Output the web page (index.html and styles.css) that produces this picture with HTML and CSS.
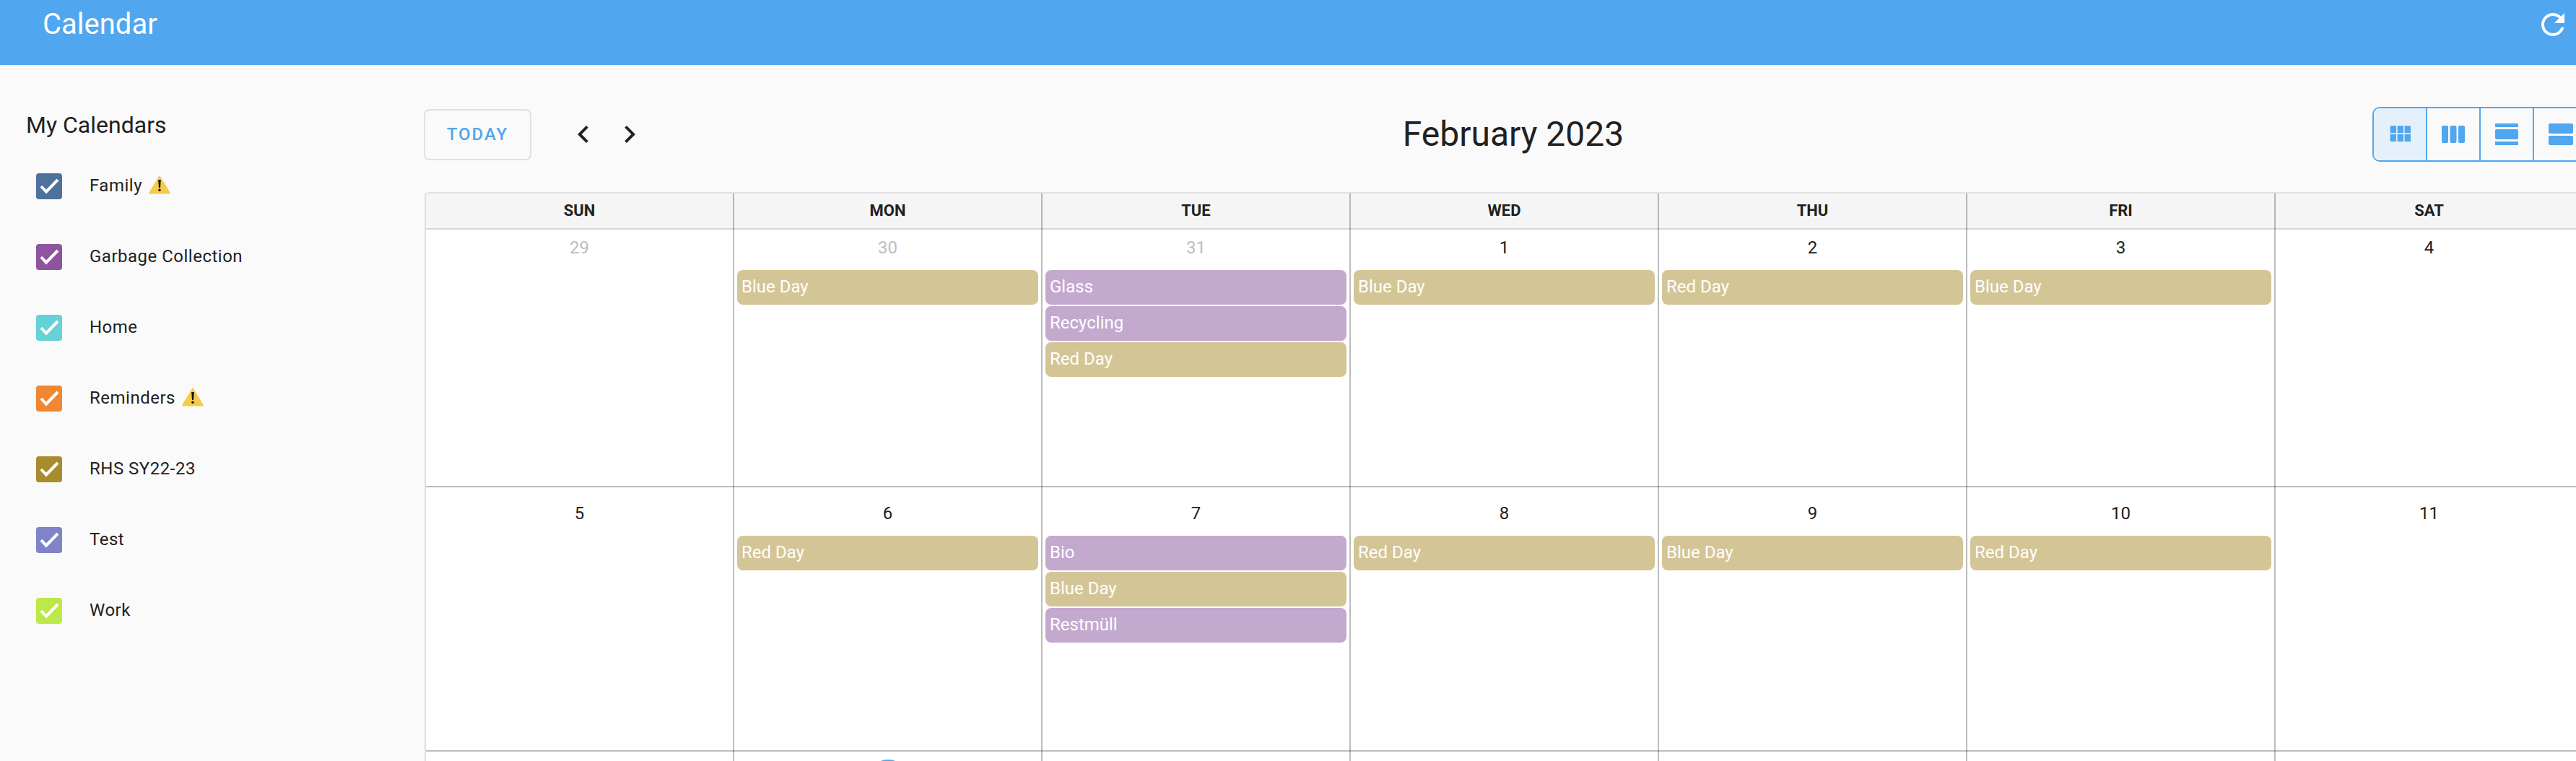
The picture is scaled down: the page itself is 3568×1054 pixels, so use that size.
FILE: index.html
```html
<!DOCTYPE html>
<html lang="en">
<head>
<meta charset="utf-8">
<title>Calendar</title>
<link rel="stylesheet" href="styles.css">
</head>
<body>
<header class="app-bar">
  <div class="app-title">Calendar</div>
  <svg class="refresh" viewBox="0 0 24 24"><path d="M17.65,6.35C16.2,4.9 14.21,4 12,4A8,8 0 0,0 4,12A8,8 0 0,0 12,20C15.73,20 18.84,17.45 19.73,14H17.65C16.83,16.33 14.61,18 12,18A6,6 0 0,1 6,12A6,6 0 0,1 12,6C13.66,6 15.14,6.69 16.22,7.78L13,11H20V4L17.65,6.35Z"/></svg>
</header>
<main class="layout">
  <aside class="sidebar">
    <h2 class="side-title">My Calendars</h2>
    <ul class="cal-list">
      <li class="cal-item"><span class="box c-family"><svg viewBox="0 0 36 36"><path d="M7 18L14 25.5L30 9"/></svg></span><span class="cal-name">Family</span><svg class="warn" viewBox="0 0 30 26"><path class="warn-bg" d="M15 1.500L29 24.500H1Z"/><path class="warn-mark" d="M13.200 6h3.600l-.8 11h-2Z"/><circle class="warn-mark" cx="15" cy="20.300" r="1.700"/></svg></li>
      <li class="cal-item"><span class="box c-garbage"><svg viewBox="0 0 36 36"><path d="M7 18L14 25.5L30 9"/></svg></span><span class="cal-name">Garbage Collection</span></li>
      <li class="cal-item"><span class="box c-home"><svg viewBox="0 0 36 36"><path d="M7 18L14 25.5L30 9"/></svg></span><span class="cal-name">Home</span></li>
      <li class="cal-item"><span class="box c-reminders"><svg viewBox="0 0 36 36"><path d="M7 18L14 25.5L30 9"/></svg></span><span class="cal-name">Reminders</span><svg class="warn" viewBox="0 0 30 26"><path class="warn-bg" d="M15 1.500L29 24.500H1Z"/><path class="warn-mark" d="M13.200 6h3.600l-.8 11h-2Z"/><circle class="warn-mark" cx="15" cy="20.300" r="1.700"/></svg></li>
      <li class="cal-item"><span class="box c-rhs"><svg viewBox="0 0 36 36"><path d="M7 18L14 25.5L30 9"/></svg></span><span class="cal-name">RHS SY22-23</span></li>
      <li class="cal-item"><span class="box c-test"><svg viewBox="0 0 36 36"><path d="M7 18L14 25.5L30 9"/></svg></span><span class="cal-name">Test</span></li>
      <li class="cal-item"><span class="box c-work"><svg viewBox="0 0 36 36"><path d="M7 18L14 25.5L30 9"/></svg></span><span class="cal-name">Work</span></li>
    </ul>
  </aside>
  <section class="content">
    <div class="toolbar">
      <div class="nav">
        <button class="today">TODAY</button>
        <button class="chev"><svg viewBox="0 0 24 24"><path d="M15.41,16.58L10.83,12L15.41,7.41L14,6L8,12L14,18L15.41,16.58Z"/></svg></button>
        <button class="chev"><svg viewBox="0 0 24 24"><path d="M8.59,16.58L13.17,12L8.59,7.41L10,6L16,12L10,18L8.59,16.58Z"/></svg></button>
      </div>
      <h1 class="month">February 2023</h1>
      <div class="views">
        <button class="view active"><svg viewBox="0 0 24 24"><path d="M16,5V11H21V5M10,11H15V5H10M16,18H21V12H16M10,18H15V12H10M4,11H9V5H4M4,18H9V12H4V18Z"/></svg></button>
        <button class="view"><svg viewBox="0 0 40 40"><rect x="4" y="8" width="9" height="24" rx="2"/><rect x="15.500" y="8" width="9" height="24" rx="2"/><rect x="27" y="8" width="9" height="24" rx="2"/></svg></button>
        <button class="view"><svg viewBox="0 0 40 40"><rect x="4" y="5" width="32" height="5"/><rect x="4" y="13" width="32" height="14" rx="2"/><rect x="4" y="30" width="32" height="5"/></svg></button>
        <button class="view"><svg viewBox="0 0 40 40"><rect x="4" y="5" width="34" height="14" rx="2"/><rect x="4" y="22" width="34" height="13" rx="2"/></svg></button>
      </div>
    </div>
    <div class="cal">
      <div class="dow-row">
        <div class="dow">SUN</div><div class="dow">MON</div><div class="dow">TUE</div><div class="dow">WED</div><div class="dow">THU</div><div class="dow">FRI</div><div class="dow">SAT</div>
      </div>
      <div class="week first">
        <div class="day"><div class="num dim">29</div></div>
        <div class="day"><div class="num dim">30</div><div class="ev gold">Blue Day</div></div>
        <div class="day"><div class="num dim">31</div><div class="ev purple">Glass</div><div class="ev purple">Recycling</div><div class="ev gold">Red Day</div></div>
        <div class="day"><div class="num">1</div><div class="ev gold">Blue Day</div></div>
        <div class="day"><div class="num">2</div><div class="ev gold">Red Day</div></div>
        <div class="day"><div class="num">3</div><div class="ev gold">Blue Day</div></div>
        <div class="day"><div class="num">4</div></div>
      </div>
      <div class="week">
        <div class="day"><div class="num">5</div></div>
        <div class="day"><div class="num">6</div><div class="ev gold">Red Day</div></div>
        <div class="day"><div class="num">7</div><div class="ev purple">Bio</div><div class="ev gold">Blue Day</div><div class="ev purple">Restmüll</div></div>
        <div class="day"><div class="num">8</div><div class="ev gold">Red Day</div></div>
        <div class="day"><div class="num">9</div><div class="ev gold">Blue Day</div></div>
        <div class="day"><div class="num">10</div><div class="ev gold">Red Day</div></div>
        <div class="day"><div class="num">11</div></div>
      </div>
      <div class="week">
        <div class="day"></div>
        <div class="day"><div class="today-dot"></div></div>
        <div class="day"></div>
        <div class="day"></div>
        <div class="day"></div>
        <div class="day"></div>
        <div class="day"></div>
      </div>
    </div>
  </section>
</main>
</body>
</html>
```
FILE: styles.css
```css
* { box-sizing: border-box; }
html, body { margin: 0; height: 100%; overflow: hidden; }
body { font-family: Roboto, "Liberation Sans", sans-serif; background: #fafafa; color: #212121; }
button { font-family: inherit; background: none; border: 0; padding: 0; margin: 0; }

.app-bar { height: 90px; background: #50a6ef; color: #fff; display: flex; justify-content: space-between; align-items: flex-start; padding: 10px 8px 0 59px; }
.app-title { font-size: 40px; line-height: 47px; }
.refresh { width: 48px; height: 48px; fill: #fff; }

.layout { display: flex; height: 964px; overflow: hidden; }
.sidebar { flex: 0 0 587px; padding: 64px 0 0 36px; }
.side-title { margin: 0; font-size: 32px; font-weight: 400; line-height: 38px; }
.cal-list { list-style: none; margin: 48px 0 0 14px; padding: 0; display: flex; flex-direction: column; gap: 62px; }
.cal-item { display: flex; align-items: center; height: 36px; }
.box { flex: none; width: 36px; height: 36px; border-radius: 4px; margin-right: 38px; }
.box svg { display: block; width: 36px; height: 36px; fill: none; stroke: #fff; stroke-width: 4; }
.cal-name { font-size: 24px; letter-spacing: .5px; line-height: 32px; position: relative; top: -1px; }
.warn { width: 30px; height: 26px; margin-left: 9px; margin-top: -4px; }
.warn-bg { fill: #f5cb4c; stroke: #f5cb4c; stroke-width: 2; stroke-linejoin: round; }
.warn-mark { fill: #111; }
.c-family { background: #4f729c; }
.c-garbage { background: #8e559e; }
.c-home { background: #64d2d6; }
.c-reminders { background: #ef8832; }
.c-rhs { background: #a88c2c; }
.c-test { background: #8083c8; }
.c-work { background: #bde84a; }

.content { flex: 0 0 3018px; padding-top: 58px; }
.toolbar { display: grid; grid-template-columns: 1fr auto 1fr; align-items: center; height: 76px; }
.nav { display: flex; align-items: center; }
.today { width: 149px; height: 71px; border: 2px solid #e0e0e0; border-radius: 8px; color: #50a6ef; font-size: 24px; font-weight: 500; letter-spacing: 2px; margin-right: 40px; }
.chev { width: 64px; height: 48px; display: flex; justify-content: center; }
.chev svg { width: 48px; height: 48px; fill: #212121; }
.month { margin: 0; font-size: 48px; font-weight: 400; line-height: 56px; }
.views { justify-self: end; margin-right: 21px; display: flex; height: 76px; border: 2px solid #50a6ef; border-radius: 10px 0 0 10px; overflow: hidden; }
.view { width: 74px; height: 72px; display: flex; align-items: center; justify-content: center; border-left: 2px solid #50a6ef; }
.view:first-child { border-left: 0; width: 72px; background: #e5f0fa; }
.view svg { width: 40px; height: 40px; fill: #50a6ef; }

.cal { margin: 42px 0 0 1px; width: 2989px; }
.dow-row { display: grid; grid-template-columns: repeat(7, 427px); height: 52px; background: #f5f5f5; border-top: 2px solid #e0e0e0; border-bottom: 2px solid rgba(0, 0, 0, .12); border-top-left-radius: 8px; }
.dow { display: flex; align-items: center; justify-content: center; padding-bottom: 4px; font-size: 22px; font-weight: 700; border-left: 2px solid rgba(0, 0, 0, .26); margin-bottom: -2px; }
.dow:first-child { border-left-color: #e0e0e0; }
.week { display: grid; grid-template-columns: repeat(7, 427px); height: 366px; border-bottom: 2px solid rgba(0, 0, 0, .26); background: #fff; }
.week.first { height: 357px; }
.day { border-left: 2px solid rgba(0, 0, 0, .26); padding: 20px 4px 0; margin-bottom: -2px; display: flex; flex-direction: column; gap: 2px; }
.day:first-child { border-left-color: #e0e0e0; }
.week.first .day { padding-top: 9px; }
.num { height: 30px; line-height: 32px; margin-bottom: 15px; text-align: center; font-size: 24px; }
.num.dim { color: #bdbdbd; }
.today-dot { width: 56px; height: 56px; border-radius: 50%; background: #50a6ef; align-self: center; margin-top: -9px; }
.ev { height: 48px; line-height: 46px; padding: 0 6px; border-radius: 8px; color: #fff; font-size: 24px; }
.gold { background: #d4c597; }
.purple { background: #c4a9cf; }
```
